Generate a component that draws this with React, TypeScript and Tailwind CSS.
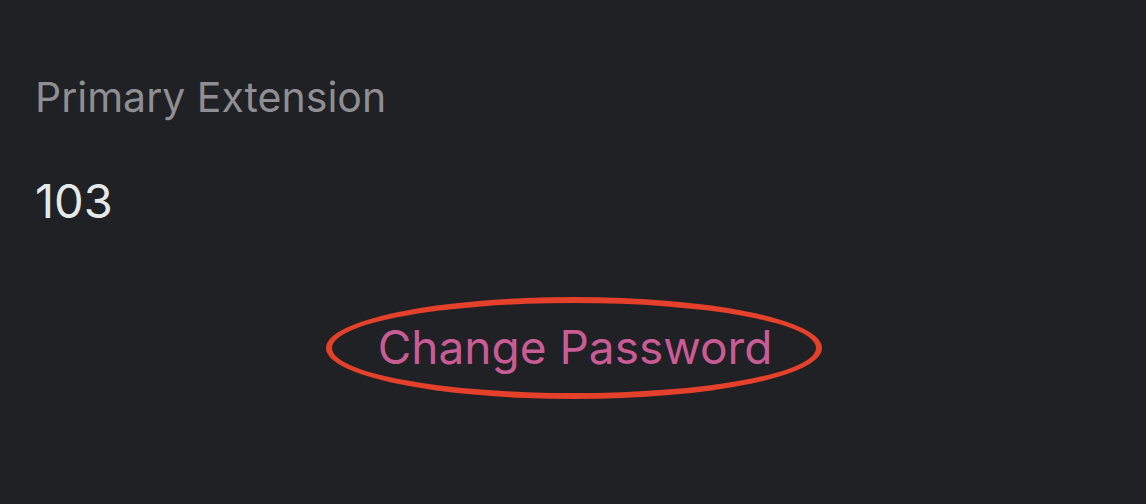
export default function App() {
  return (
    <div
      className="w-[1146px] h-[504px] bg-[#202124] overflow-hidden"
      style={{ fontFamily: "Inter, 'Noto Sans', sans-serif" }}
    >
      <div className="pl-[35px] pt-[72px]">
        <p className="text-[41px] leading-[50px] text-[#8e8e93]">Primary Extension</p>
        <p className="mt-[54px] text-[47px] leading-[50px] text-[#e3e8e8]">103</p>
      </div>
      <div className="flex justify-center mt-[71px] pl-[2px]">
        <div className="w-[496px] h-[102px] rounded-[50%] border-[6px] border-[#e5402a] flex items-center justify-center">
          <button className="text-[46px] leading-none text-[#c95b95] pb-[3px] pl-[2px]">Change Password</button>
        </div>
      </div>
    </div>
  );
}
